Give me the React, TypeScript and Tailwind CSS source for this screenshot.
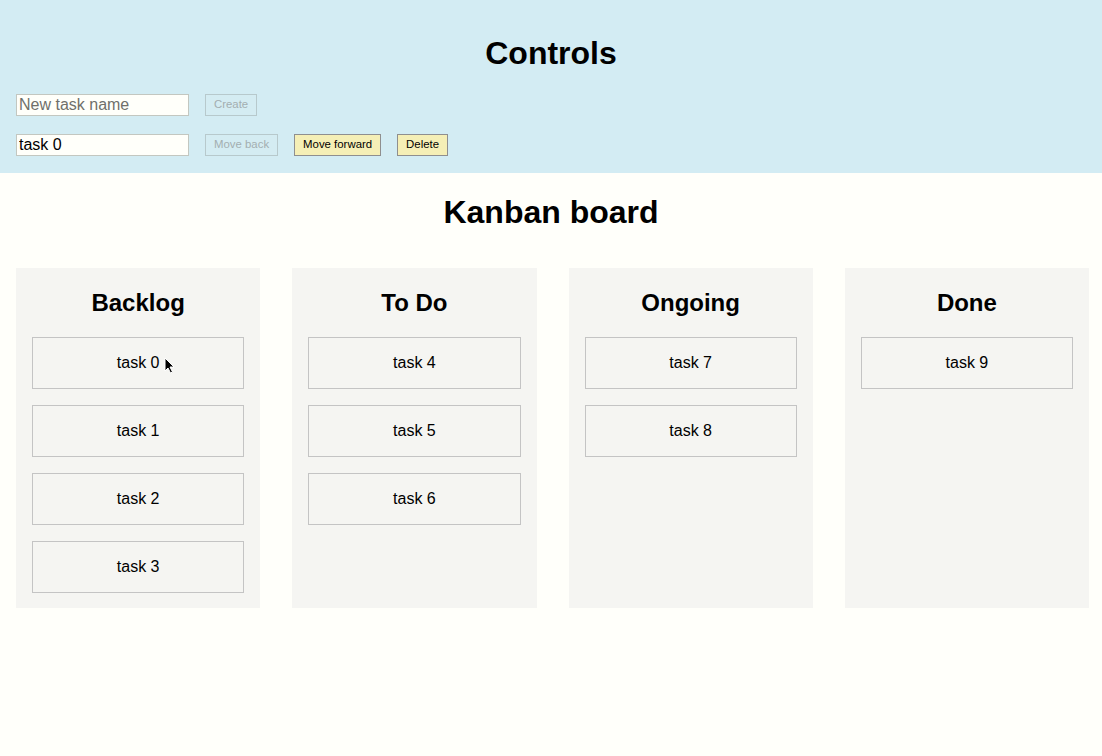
import React, { useState } from 'react';

type Stage = 'Backlog' | 'To Do' | 'Ongoing' | 'Done';

interface Task {
  name: string;
  stage: number;
}

const stages: Stage[] = ['Backlog', 'To Do', 'Ongoing', 'Done'];

const initialTasks: Task[] = [
  { name: 'task 0', stage: 0 },
  { name: 'task 1', stage: 0 },
  { name: 'task 2', stage: 0 },
  { name: 'task 3', stage: 0 },
  { name: 'task 4', stage: 1 },
  { name: 'task 5', stage: 1 },
  { name: 'task 6', stage: 1 },
  { name: 'task 7', stage: 2 },
  { name: 'task 8', stage: 2 },
  { name: 'task 9', stage: 3 },
];

const Cursor = () => (
  <svg width="11" height="17" viewBox="0 0 11 17" className="absolute left-[131px] top-[19px]">
    <path d="M1 1 L1 14 L4 11 L6.5 16 L8.5 15 L6 10 L10 10 Z" fill="#000" stroke="#fff" strokeWidth="1" strokeLinejoin="round" />
  </svg>
);

const App: React.FC = () => {
  const [tasks, setTasks] = useState<Task[]>(initialTasks);
  const [newName, setNewName] = useState('');
  const [selected, setSelected] = useState('task 0');

  const current = tasks.find(t => t.name === selected);

  const btn = 'h-[22px] px-[8px] text-[11.4px] border leading-none';
  const enabled = 'bg-[#f5efb6] border-[#8f8f8f] text-black';
  const disabled = 'bg-[#d4ecf2] border-[#b7c9cc] text-[#a3aeb0]';

  const move = (dir: number) => {
    if (!current) return;
    setTasks(tasks.map(t => (t.name === current.name ? { ...t, stage: t.stage + dir } : t)));
  };

  return (
    <div className="min-h-[756px] bg-[#fffffa] font-['Liberation_Sans',Arial,sans-serif] text-black">
      <div className="bg-[#d3ecf3] pt-[35px] pb-[17px] px-4">
        <h1 className="text-center text-[32px] font-bold leading-[37px]">Controls</h1>
        <div className="mt-[22px] flex items-center gap-4">
          <input
            value={newName}
            onChange={e => setNewName(e.target.value)}
            placeholder="New task name"
            className="w-[173px] h-[22px] px-[2px] text-[16px] bg-[#fffffa] border border-[#c3c7c0] placeholder:text-[#6f6f6a] outline-none"
          />
          <button className={`${btn} ${newName ? enabled : disabled}`} disabled={!newName}>
            Create
          </button>
        </div>
        <div className="mt-[18px] flex items-center gap-4">
          <input
            value={selected}
            onChange={e => setSelected(e.target.value)}
            className="w-[173px] h-[22px] px-[2px] text-[16px] bg-[#fffffa] border border-[#c3c7c0] outline-none"
          />
          <button
            className={`${btn} ${current && current.stage > 0 ? enabled : disabled}`}
            onClick={() => move(-1)}
          >
            Move back
          </button>
          <button
            className={`${btn} ${current && current.stage < 3 ? enabled : disabled}`}
            onClick={() => move(1)}
          >
            Move forward
          </button>
          <button
            className={`${btn} ${current ? enabled : disabled}`}
            onClick={() => setTasks(tasks.filter(t => t.name !== selected))}
          >
            Delete
          </button>
        </div>
      </div>

      <h1 className="mt-[21px] text-center text-[32px] font-bold leading-[37px]">Kanban board</h1>

      <div className="mt-[37px] grid grid-cols-4 gap-8 pl-4 pr-[13px]">
        {stages.map((stage, i) => (
          <div key={stage} className="bg-[#f5f5f2] pt-[21px] pb-[15px] px-4">
            <h2 className="text-center text-[24px] font-bold leading-[28px]">{stage}</h2>
            <div className="mt-[20px] flex flex-col gap-4">
              {tasks
                .filter(t => t.stage === i)
                .map(t => (
                  <div
                    key={t.name}
                    className="relative h-[52px] flex items-center justify-center border border-[#c4c4c4] text-[16px]"
                  >
                    {t.name}
                    {t.name === 'task 0' && <Cursor />}
                  </div>
                ))}
            </div>
          </div>
        ))}
      </div>
    </div>
  );
};

export default App;
